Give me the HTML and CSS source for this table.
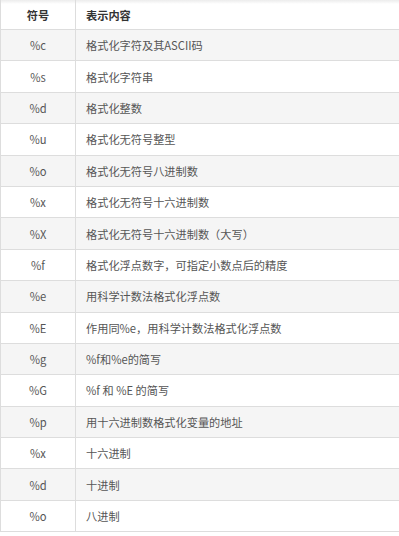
FILE: index.html
```html
<!DOCTYPE html>
<html lang="zh">
<head>
<meta charset="utf-8">
<link rel="stylesheet" href="styles.css">
</head>
<body>
<div class="table">
  <div class="row head"><div class="c1">符号</div><div class="c2">表示内容</div></div>
  <div class="row alt"><div class="c1">%c</div><div class="c2">格式化字符及其ASCII码</div></div>
  <div class="row"><div class="c1">%s</div><div class="c2">格式化字符串</div></div>
  <div class="row alt"><div class="c1">%d</div><div class="c2">格式化整数</div></div>
  <div class="row"><div class="c1">%u</div><div class="c2">格式化无符号整型</div></div>
  <div class="row alt"><div class="c1">%o</div><div class="c2">格式化无符号八进制数</div></div>
  <div class="row"><div class="c1">%x</div><div class="c2">格式化无符号十六进制数</div></div>
  <div class="row alt"><div class="c1">%X</div><div class="c2">格式化无符号十六进制数（大写）</div></div>
  <div class="row"><div class="c1">%f</div><div class="c2">格式化浮点数字，可指定小数点后的精度</div></div>
  <div class="row alt"><div class="c1">%e</div><div class="c2">用科学计数法格式化浮点数</div></div>
  <div class="row"><div class="c1">%E</div><div class="c2">作用同%e，用科学计数法格式化浮点数</div></div>
  <div class="row alt"><div class="c1">%g</div><div class="c2">%f和%e的简写</div></div>
  <div class="row"><div class="c1">%G</div><div class="c2">%f 和 %E 的简写</div></div>
  <div class="row alt"><div class="c1">%p</div><div class="c2">用十六进制数格式化变量的地址</div></div>
  <div class="row"><div class="c1">%x</div><div class="c2">十六进制</div></div>
  <div class="row alt"><div class="c1">%d</div><div class="c2">十进制</div></div>
  <div class="row"><div class="c1">%o</div><div class="c2">八进制</div></div>
</div>
</body>
</html>
```

FILE: styles.css
```css
html, body {
  margin: 0;
  padding: 0;
  background: #fff;
}
body {
  font-family: "Noto Sans CJK SC", "Liberation Sans", sans-serif;
  font-size: 11.2px;
  color: #555;
}
.table {
  border-left: 1px solid #ddd;
}
.row {
  display: grid;
  grid-template-columns: 74px 1fr;
  height: 31.4px;
  box-sizing: border-box;
  border-bottom: 1px solid #ddd;
  align-items: center;
}
.row.head {
  height: 30px;
  font-weight: bold;
  color: #333;
  background: linear-gradient(#ececec 0, #fff 4px);
}
.row.alt {
  background: #f5f5f5;
}
.c1 {
  height: 100%;
  display: flex;
  align-items: center;
  justify-content: center;
}
.c2 {
  height: 100%;
  border-left: 1px solid #ddd;
  padding-left: 10px;
  display: flex;
  align-items: center;
  white-space: nowrap;
}
```
